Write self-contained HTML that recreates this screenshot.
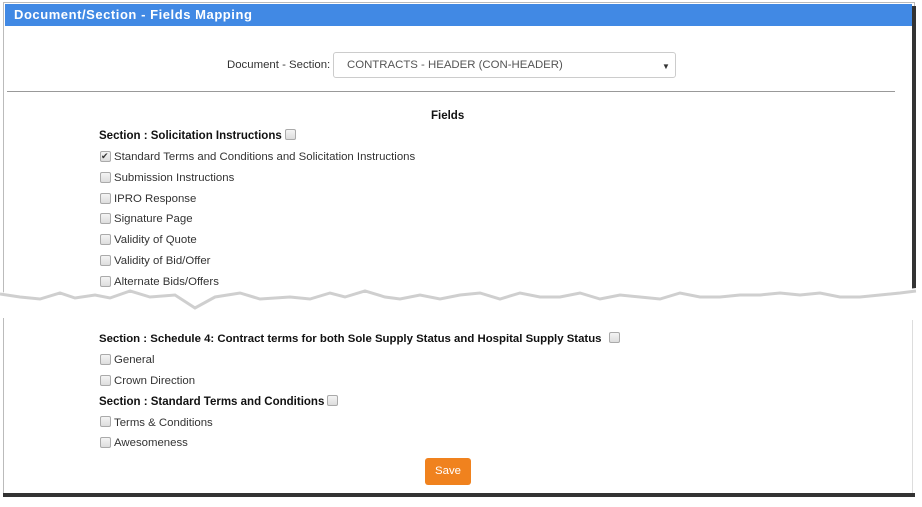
<!DOCTYPE html>
<html><head><style>
body{margin:0;width:922px;height:507px;background:#fff;position:relative;overflow:hidden;font-family:"Liberation Sans",Arial,sans-serif;font-size:11.4px;color:#333}
.a{position:absolute;white-space:nowrap;line-height:15px}
.cb{position:absolute;width:9px;height:9px;border:1px solid #aaa;border-radius:2px;background:linear-gradient(#f4f4f4,#ddd)}
.b{font-weight:bold;color:#111;font-size:11.5px}
</style></head><body>
<div class="a" style="left:3px;top:2px;width:910px;height:300px;border:1px solid #bbb;border-bottom:none"></div>
<div class="a" style="left:912px;top:6px;width:4px;height:294px;background:#333"></div>
<div class="a" style="left:5px;top:4px;width:907px;height:22px;background:#4189e4"></div>
<div class="a" style="left:14px;top:7px;color:#fff;font-size:13px;font-weight:bold;letter-spacing:0.55px">Document/Section - Fields Mapping</div>
<div class="a" style="left:227px;top:58px">Document - Section:</div>
<div class="a" style="left:333px;top:52px;width:341px;height:24px;border:1px solid #ccc;border-radius:3px"></div>
<div class="a" style="left:347px;top:58px;color:#555">CONTRACTS - HEADER (CON-HEADER)</div>
<div class="a" style="left:662px;top:59px;font-size:8px;color:#333">▼</div>
<div class="a" style="left:7px;top:91px;width:888px;height:1px;background:#999"></div>
<div class="a b" style="left:431px;top:109px">Fields</div>
<div class="a b" style="left:99px;top:129px">Section : Solicitation Instructions</div>
<div class="cb" style="left:285px;top:129px"></div>
<div class="cb" style="left:100px;top:151px"></div><div class="a" style="left:101px;top:149px;font-size:9px;color:#333">✔</div>
<div class="a" style="left:114px;top:150px">Standard Terms and Conditions and Solicitation Instructions</div>
<div class="cb" style="left:100px;top:172px"></div><div class="a" style="left:114px;top:171px">Submission Instructions</div>
<div class="cb" style="left:100px;top:193px"></div><div class="a" style="left:114px;top:192px">IPRO Response</div>
<div class="cb" style="left:100px;top:213px"></div><div class="a" style="left:114px;top:212px">Signature Page</div>
<div class="cb" style="left:100px;top:234px"></div><div class="a" style="left:114px;top:233px">Validity of Quote</div>
<div class="cb" style="left:100px;top:255px"></div><div class="a" style="left:114px;top:254px">Validity of Bid/Offer</div>
<div class="cb" style="left:100px;top:276px"></div><div class="a" style="left:114px;top:275px">Alternate Bids/Offers</div>
<svg class="a" style="left:0;top:280px" width="922" height="40">
<path d="M0,12 L20,14 L40,16 L60,10 L75,15 L95,12 L110,15 L130,8 L150,14 L175,12 L195,18 L215,14 L240,10 L260,16 L290,14 L310,16 L330,10 L345,14 L365,8 L385,14 L400,16 L420,12 L440,16 L460,12 L480,10 L500,16 L520,10 L540,14 L560,14 L580,10 L600,16 L620,12 L640,14 L660,16 L680,10 L700,14 L720,14 L740,12 L760,12 L780,10 L800,12 L820,10 L840,14 L860,14 L880,12 L900,10 L916,8 L922,8 L922,40 L0,40Z" fill="#fff"/>
<path d="M0,14 L20,17 L40,19 L60,13 L75,18 L95,15 L110,18 L130,11 L150,17 L175,15 L195,28 L215,17 L240,13 L260,19 L290,17 L310,19 L330,13 L345,17 L365,11 L385,17 L400,19 L420,15 L440,19 L460,15 L480,13 L500,19 L520,13 L540,17 L560,17 L580,13 L600,19 L620,15 L640,17 L660,19 L680,13 L700,17 L720,17 L740,15 L760,15 L780,13 L800,15 L820,13 L840,17 L860,17 L880,15 L900,13 L916,11" fill="none" stroke="#bbb" stroke-width="3" opacity=".7"/>
</svg>
<div class="a" style="left:3px;top:318px;width:1px;height:176px;background:#bbb"></div>
<div class="a" style="left:912px;top:320px;width:1px;height:174px;background:#ddd"></div>
<div class="a" style="left:3px;top:493px;width:912px;height:4px;background:#333"></div>
<div class="a b" style="left:99px;top:332px;font-size:11.4px">Section : Schedule 4: Contract terms for both Sole Supply Status and Hospital Supply Status</div>
<div class="cb" style="left:609px;top:332px"></div>
<div class="cb" style="left:100px;top:354px"></div><div class="a" style="left:114px;top:353px">General</div>
<div class="cb" style="left:100px;top:375px"></div><div class="a" style="left:114px;top:374px">Crown Direction</div>
<div class="a b" style="left:99px;top:395px">Section : Standard Terms and Conditions</div>
<div class="cb" style="left:327px;top:395px"></div>
<div class="cb" style="left:100px;top:416px"></div><div class="a" style="left:114px;top:416px">Terms &amp; Conditions</div>
<div class="cb" style="left:100px;top:437px"></div><div class="a" style="left:114px;top:436px">Awesomeness</div>
<div class="a" style="left:425px;top:458px;width:46px;height:27px;background:#f0821e;border-radius:3px;color:#fff;text-align:center;line-height:27px">Save</div>
</body></html>
